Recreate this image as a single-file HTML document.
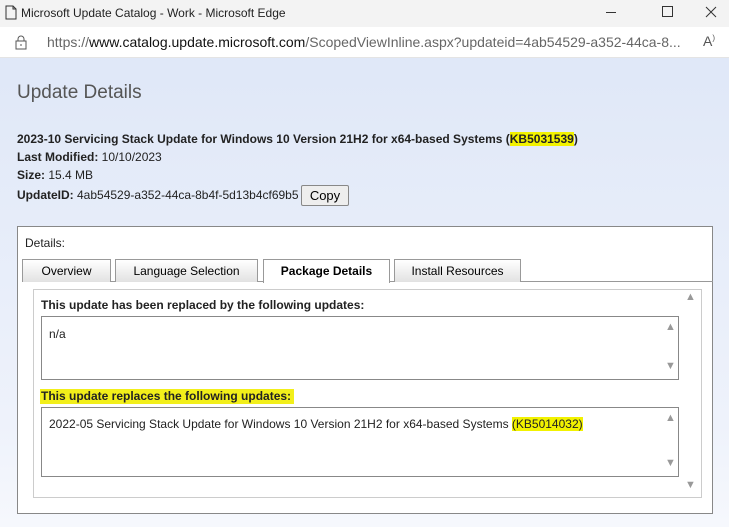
<!DOCTYPE html>
<html><head><style>
*{margin:0;padding:0;box-sizing:border-box}
body{width:729px;height:527px;overflow:hidden;font-family:"Liberation Sans",sans-serif;position:relative;background:linear-gradient(#dde6f7,#eef2fb 80%,#f6f8fd)}
.a{position:absolute;white-space:nowrap}
.tb{left:0;top:0;width:729px;height:27px;background:#f3f3f3;font-size:12px;color:#222}
.ab{left:0;top:27px;width:729px;height:31px;background:#fff;font-size:14px;color:#666;border-bottom:1px solid #e4e4e4}
.f{font-size:12px;color:#222}
b{font-weight:bold}
.hl{background:#f2f200}
.box{border:1px solid #888;background:#fff}
.tab{top:259px;height:23px;border:1px solid #999;border-bottom:none;background:linear-gradient(#fff,#e2e2e2);font-size:12px;text-align:center;line-height:22px}
.arr{font-size:11px;color:#999}
</style></head><body>
<div class="a tb">
<svg class="a" style="left:5px;top:5px" width="12" height="15"><path d="M1 1h7l3 3v10H1z M8 1v3h3" fill="none" stroke="#333"/></svg>
<span class="a" style="left:21px;top:6px">Microsoft Update Catalog - Work - Microsoft Edge</span>
<span class="a" style="left:606px;top:12px;width:10px;height:1px;background:#333"></span>
<span class="a" style="left:662px;top:6px;width:11px;height:11px;border:1px solid #333"></span>
<svg class="a" style="left:705px;top:6px" width="12" height="12"><path d="M1 1L11 11M11 1L1 11" stroke="#333"/></svg>
</div>
<div class="a ab">
<svg class="a" style="left:15px;top:8px" width="12" height="15"><rect x="1" y="6" width="10" height="8" fill="none" stroke="#555"/><path d="M3 6V4a3 3 0 0 1 6 0v2" fill="none" stroke="#555"/><path d="M6 9v2" stroke="#555"/></svg>
<span class="a" style="left:47px;top:7px">https://<span style="color:#111">www.catalog.update.microsoft.com</span>/ScopedViewInline.aspx?updateid=4ab54529-a352-44ca-8...</span>
<span class="a" style="left:703px;top:6px;color:#555">A<sup style="font-size:8px">)</sup></span>
</div>
<div class="a" style="left:17px;top:82px;font-size:19px;color:#555">Update Details</div>
<div class="a f" style="left:17px;top:132px"><b>2023-10 Servicing Stack Update for Windows 10 Version 21H2 for x64-based Systems (<span class="hl">KB5031539</span>)</b></div>
<div class="a f" style="left:17px;top:150px"><b>Last Modified:</b> 10/10/2023</div>
<div class="a f" style="left:17px;top:168px"><b>Size:</b> 15.4 MB</div>
<div class="a f" style="left:17px;top:188px"><b>UpdateID:</b> 4ab54529-a352-44ca-8b4f-5d13b4cf69b5</div>
<div class="a" style="left:301px;top:185px;width:48px;height:21px;border:1px solid #888;border-radius:2px;background:#eee;font-size:13px;text-align:center;line-height:19px">Copy</div>
<div class="a box" style="left:17px;top:226px;width:696px;height:288px"></div>
<div class="a f" style="left:25px;top:236px">Details:</div>
<div class="a" style="left:22px;top:281px;width:691px;height:1px;background:#999"></div>
<div class="a tab" style="left:22px;width:89px">Overview</div>
<div class="a tab" style="left:115px;width:143px">Language Selection</div>
<div class="a tab" style="left:263px;width:127px;height:24px;background:#fff;font-weight:bold">Package Details</div>
<div class="a tab" style="left:394px;width:127px">Install Resources</div>
<div class="a" style="left:33px;top:289px;width:669px;height:209px;border:1px solid #ccc;background:#fff"></div>
<span class="a arr" style="left:685px;top:291px">▲</span>
<span class="a arr" style="left:685px;top:479px">▼</span>
<div class="a f" style="left:41px;top:298px"><b>This update has been replaced by the following updates:</b></div>
<div class="a box" style="left:41px;top:316px;width:638px;height:64px"></div>
<div class="a f" style="left:49px;top:327px">n/a</div>
<span class="a arr" style="left:665px;top:321px">▲</span>
<span class="a arr" style="left:665px;top:360px">▼</span>
<div class="a f" style="left:40px;top:389px;background:#f2ef1a;padding:0 3px 1px 1px"><b>This update replaces the following updates:</b></div>
<div class="a box" style="left:41px;top:407px;width:638px;height:70px"></div>
<div class="a f" style="left:49px;top:417px">2022-05 Servicing Stack Update for Windows 10 Version 21H2 for x64-based Systems <span class="hl">(KB5014032)</span></div>
<span class="a arr" style="left:665px;top:412px">▲</span>
<span class="a arr" style="left:665px;top:457px">▼</span>
</body></html>
